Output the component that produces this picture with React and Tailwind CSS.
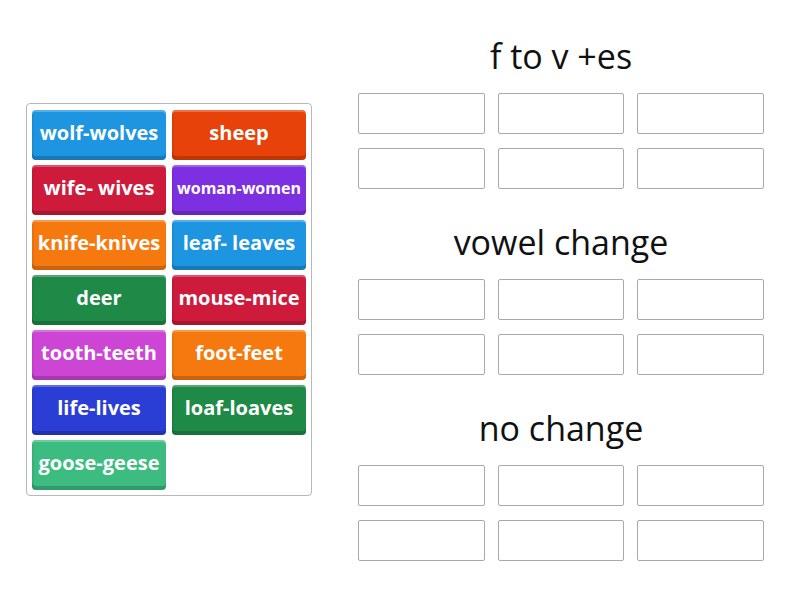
const tiles = [
  { text: 'wolf-wolves', bg: 'bg-[#1d95e0]' },
  { text: 'sheep', bg: 'bg-[#e6420a]' },
  { text: 'wife- wives', bg: 'bg-[#cf1b3b]' },
  { text: 'woman-women', bg: 'bg-[#7d30e2]', small: true },
  { text: 'knife-knives', bg: 'bg-[#f6790f]' },
  { text: 'leaf- leaves', bg: 'bg-[#1d95e0]' },
  { text: 'deer', bg: 'bg-[#1f8a47]' },
  { text: 'mouse-mice', bg: 'bg-[#cf1b3b]' },
  { text: 'tooth-teeth', bg: 'bg-[#cc45d5]' },
  { text: 'foot-feet', bg: 'bg-[#f6790f]' },
  { text: 'life-lives', bg: 'bg-[#2a3ed6]' },
  { text: 'loaf-loaves', bg: 'bg-[#1f8a47]' },
  { text: 'goose-geese', bg: 'bg-[#3cbc80]' },
];

const groups = ['f to v +es', 'vowel change', 'no change'];

function Tile({ text, bg, small }) {
  return (
    <div
      className={`${bg} flex h-[50px] items-center justify-center rounded-[4px] font-bold text-white shadow-[inset_0_2px_0_rgba(255,255,255,0.25),inset_0_-4px_0_rgba(0,0,0,0.18),inset_2px_0_0_rgba(0,0,0,0.06)] ${small ? 'text-[16px]' : 'text-[20px]'}`}
    >
      <span className="-mt-[5px] whitespace-nowrap">{text}</span>
    </div>
  );
}

function Group({ title }) {
  return (
    <div className="flex flex-col">
      <h2 className="h-[38px] text-center text-[34px] leading-[38px] text-[#111]">{title}</h2>
      <div className="mt-[18px] grid grid-cols-3 gap-x-[13px] gap-y-[14px]">
        {Array.from({ length: 6 }).map((_, i) => (
          <div key={i} className="h-[41px] rounded-[2px] border border-[#a9a9a9] bg-white" />
        ))}
      </div>
    </div>
  );
}

export default function App() {
  return (
    <div className="flex h-[600px] w-[800px] bg-white font-['Open_Sans',sans-serif]">
      <div className="ml-[26px] mt-[103px] self-start">
        <div className="grid grid-cols-[134px_134px] gap-x-[6px] gap-y-[5px] rounded-[4px] border border-[#b8b8b8] px-[5px] pb-[5px] pt-[6px]">
          {tiles.map((t) => (
            <Tile key={t.text} {...t} />
          ))}
        </div>
      </div>
      <div className="ml-[46px] mt-[37px] flex w-[406px] flex-col gap-[34px]">
        {groups.map((g) => (
          <Group key={g} title={g} />
        ))}
      </div>
    </div>
  );
}
